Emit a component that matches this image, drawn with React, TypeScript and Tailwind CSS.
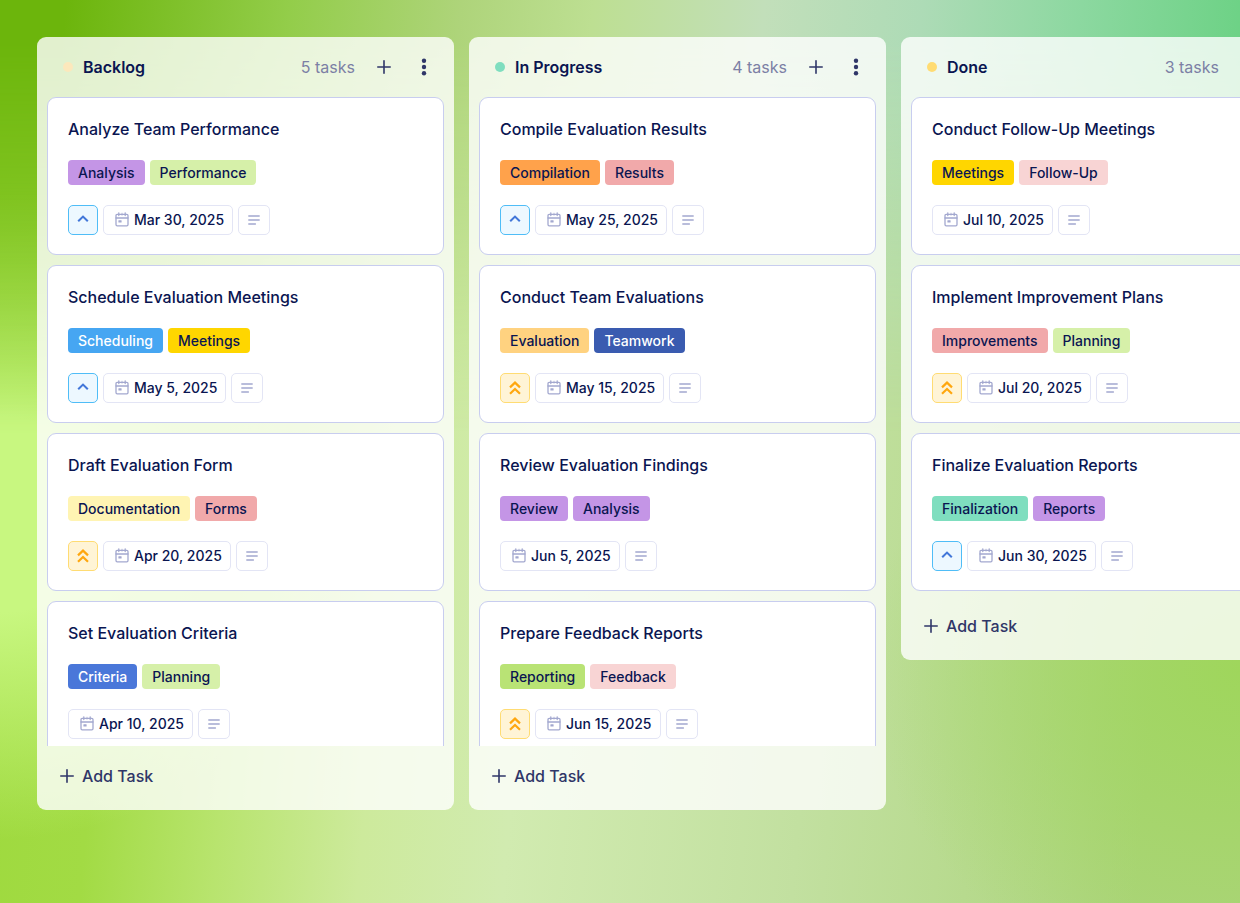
import React from 'react';

type Priority = 'medium' | 'high';

interface Tag {
  name: string;
  className: string;
}

interface Task {
  title: string;
  tags: Tag[];
  date: string;
  priority?: Priority;
}

interface BoardColumn {
  title: string;
  dot: string;
  count: number;
  tasks: Task[];
}

const COLUMNS: BoardColumn[] = [
  {
    title: 'Backlog',
    dot: 'bg-[#fce8bc]',
    count: 5,
    tasks: [
      {
        title: 'Analyze Team Performance',
        tags: [
          { name: 'Analysis', className: 'bg-[#c495e6]' },
          { name: 'Performance', className: 'bg-[#d6f0a9]' },
        ],
        date: 'Mar 30, 2025',
        priority: 'medium',
      },
      {
        title: 'Schedule Evaluation Meetings',
        tags: [
          { name: 'Scheduling', className: 'bg-[#46a6f2] text-white' },
          { name: 'Meetings', className: 'bg-[#ffd600]' },
        ],
        date: 'May 5, 2025',
        priority: 'medium',
      },
      {
        title: 'Draft Evaluation Form',
        tags: [
          { name: 'Documentation', className: 'bg-[#fff4b3]' },
          { name: 'Forms', className: 'bg-[#f1a9aa]' },
        ],
        date: 'Apr 20, 2025',
        priority: 'high',
      },
      {
        title: 'Set Evaluation Criteria',
        tags: [
          { name: 'Criteria', className: 'bg-[#4a77d9] text-white' },
          { name: 'Planning', className: 'bg-[#d6f0a9]' },
        ],
        date: 'Apr 10, 2025',
      },
    ],
  },
  {
    title: 'In Progress',
    dot: 'bg-[#7fdebf]',
    count: 4,
    tasks: [
      {
        title: 'Compile Evaluation Results',
        tags: [
          { name: 'Compilation', className: 'bg-[#ffa24b]' },
          { name: 'Results', className: 'bg-[#f1a9aa]' },
        ],
        date: 'May 25, 2025',
        priority: 'medium',
      },
      {
        title: 'Conduct Team Evaluations',
        tags: [
          { name: 'Evaluation', className: 'bg-[#ffd280]' },
          { name: 'Teamwork', className: 'bg-[#3a5bb0] text-white' },
        ],
        date: 'May 15, 2025',
        priority: 'high',
      },
      {
        title: 'Review Evaluation Findings',
        tags: [
          { name: 'Review', className: 'bg-[#c495e6]' },
          { name: 'Analysis', className: 'bg-[#c495e6]' },
        ],
        date: 'Jun 5, 2025',
      },
      {
        title: 'Prepare Feedback Reports',
        tags: [
          { name: 'Reporting', className: 'bg-[#b9e375]' },
          { name: 'Feedback', className: 'bg-[#f8d4d4]' },
        ],
        date: 'Jun 15, 2025',
        priority: 'high',
      },
    ],
  },
  {
    title: 'Done',
    dot: 'bg-[#ffdc73]',
    count: 3,
    tasks: [
      {
        title: 'Conduct Follow-Up Meetings',
        tags: [
          { name: 'Meetings', className: 'bg-[#ffd600]' },
          { name: 'Follow-Up', className: 'bg-[#f8d4d4]' },
        ],
        date: 'Jul 10, 2025',
      },
      {
        title: 'Implement Improvement Plans',
        tags: [
          { name: 'Improvements', className: 'bg-[#f1a9aa]' },
          { name: 'Planning', className: 'bg-[#d6f0a9]' },
        ],
        date: 'Jul 20, 2025',
        priority: 'high',
      },
      {
        title: 'Finalize Evaluation Reports',
        tags: [
          { name: 'Finalization', className: 'bg-[#7fdebf]' },
          { name: 'Reports', className: 'bg-[#c495e6]' },
        ],
        date: 'Jun 30, 2025',
        priority: 'medium',
      },
    ],
  },
];

const PlusIcon: React.FC = () => (
  <svg width="14" height="14" viewBox="0 0 14 14" fill="none" stroke="currentColor" strokeWidth="1.6" strokeLinecap="round">
    <path d="M7 .8v12.4M.8 7h12.4" />
  </svg>
);

const MoreIcon: React.FC = () => (
  <svg width="6" height="18" viewBox="0 0 6 18" fill="currentColor">
    <circle cx="3" cy="2.8" r="2.2" />
    <circle cx="3" cy="9" r="2.2" />
    <circle cx="3" cy="15.2" r="2.2" />
  </svg>
);

const CalendarIcon: React.FC = () => (
  <svg width="14" height="17" viewBox="0 0 14 17" fill="none" stroke="#a3a8cf" strokeWidth="1.3" strokeLinecap="round">
    <rect x="1" y="2.4" width="12" height="11.4" rx="1.2" />
    <path d="M1 6h12M3.8 .8v2.8M10.2 .8v2.8" />
    <path d="M7 1.2v2" strokeWidth=".8" />
    <rect x="3.4" y="8.2" width="3.2" height="2.4" rx=".5" fill="#a3a8cf" stroke="none" />
  </svg>
);

const LinesIcon: React.FC = () => (
  <svg width="12" height="10" viewBox="0 0 12 10" fill="none" stroke="#a3a8cf" strokeWidth="1.4" strokeLinecap="round">
    <path d="M.8 1h10.4M.8 5h10.4M.8 9h6.6" />
  </svg>
);

const PriorityButton: React.FC<{ priority: Priority }> = ({ priority }) =>
  priority === 'medium' ? (
    <button
      aria-label="Medium priority"
      className="flex size-[30px] items-center justify-center rounded-[5px] border border-[#4fbdf7] bg-[#edf8ff]"
    >
      <svg width="12" height="10" viewBox="0 0 12 10" fill="none" stroke="#4277d9" strokeWidth="2.1">
        <path d="M1.2 6.2 6 1.6l4.8 4.6" />
      </svg>
    </button>
  ) : (
    <button
      aria-label="High priority"
      className="flex size-[30px] items-center justify-center rounded-[5px] border border-[#ffdc73] bg-[#fff4d6]"
    >
      <svg width="12" height="14" viewBox="0 0 12 14" fill="none" stroke="#ffa70f" strokeWidth="2.2">
        <path d="M1 6.4l5-4.8 5 4.8M1 12.8 6 8l5 4.8" />
      </svg>
    </button>
  );

const TaskCard: React.FC<{ task: Task }> = ({ task }) => (
  <article className="shrink-0 rounded-[9px] border border-[#c8cdef] bg-white px-5 py-[19px]">
    <h3 className="text-base leading-6 font-medium">{task.title}</h3>
    <div className="mt-[19px] flex gap-[5px]">
      {task.tags.map((tag) => (
        <span
          key={tag.name}
          className={`rounded-[4px] px-[10px] text-sm leading-[25px] font-medium ${tag.className}`}
        >
          {tag.name}
        </span>
      ))}
    </div>
    <div className="mt-5 flex gap-[5px]">
      {task.priority && <PriorityButton priority={task.priority} />}
      <button className="flex h-[30px] items-center gap-[5px] rounded-[5px] border border-[#e3e5f5] pr-2 pl-[11px] text-sm font-medium">
        <CalendarIcon />
        {task.date}
      </button>
      <button
        aria-label="Description"
        className="flex h-[30px] w-8 items-center justify-center rounded-[5px] border border-[#e3e5f5]"
      >
        <LinesIcon />
      </button>
    </div>
  </article>
);

const Column: React.FC<{ column: BoardColumn }> = ({ column }) => (
  <section className="flex max-h-[calc(100vh-130px)] w-[417px] shrink-0 flex-col rounded-[9px] bg-white/80 px-[10px]">
    <header className="flex h-[60px] shrink-0 items-center pr-[17px] pl-4">
      <span className={`size-[10px] rounded-full ${column.dot}`} />
      <h2 className="ml-[10px] text-base font-semibold">{column.title}</h2>
      <span className="ml-auto text-base text-[#7c80a5]">{column.count} tasks</span>
      <button aria-label="Add task" className="ml-[22px] text-[#2f3668]">
        <PlusIcon />
      </button>
      <button aria-label="Column menu" className="ml-[30px] text-[#2f3668]">
        <MoreIcon />
      </button>
    </header>
    <div className="flex min-h-0 flex-col gap-[10px] overflow-y-auto pb-[5px] [scrollbar-width:none]">
      {column.tasks.map((task) => (
        <TaskCard key={task.title} task={task} />
      ))}
    </div>
    <button className="flex h-16 shrink-0 items-center gap-2 self-start pb-1 pl-[13px] text-base font-medium text-[#2f3668]">
      <PlusIcon />
      Add Task
    </button>
  </section>
);

// Soft green wallpaper: one colour sweep at the bottom, another fading in over it from the top
const Wallpaper: React.FC = () => (
  <div className="absolute inset-0 -z-10 bg-[radial-gradient(ellipse_28%_36%_at_0%_57%,#c8f780_0%,#c8f780_30%,transparent_100%),radial-gradient(ellipse_30%_36%_at_100%_74%,#9fd65c_0%,transparent_100%),linear-gradient(95deg,#9dd93c_0%,#a2db44_12%,#b8e46e_22%,#cdea9c_33%,#d1ebb0_44%,#c2e0a0_66%,#acd47c_92%)]">
    <div className="absolute inset-0 bg-[linear-gradient(95deg,#6cb50c_0%,#6cb50c_5%,#93cd4a_22%,#aed47a_35%,#bddf92_45%,#c2dfba_58%,#addbb6_70%,#8cd8a0_82%,#69d182_96%)] [mask-image:linear-gradient(to_bottom,black_5%,transparent_48%)]" />
  </div>
);

export default function App() {
  return (
    <main className="relative isolate min-h-screen overflow-hidden p-[37px] font-[Inter,sans-serif] text-[#0a1551]">
      <Wallpaper />
      <div className="flex items-start gap-[15px]">
        {COLUMNS.map((column) => (
          <Column key={column.title} column={column} />
        ))}
      </div>
    </main>
  );
}
